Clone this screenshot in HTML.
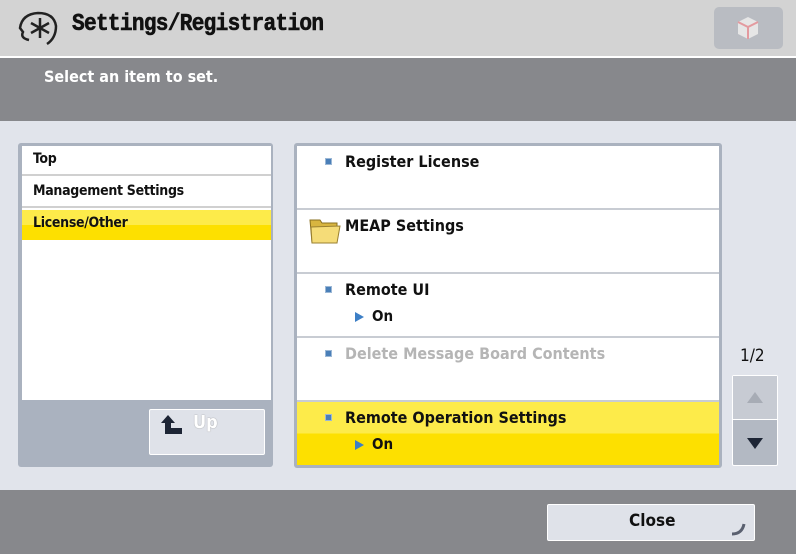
<!DOCTYPE html>
<html><head><style>
*{margin:0;padding:0;box-sizing:border-box}
body{width:796px;height:554px;overflow:hidden;position:relative;background:#e1e4eb;font-family:"DejaVu Sans","Liberation Sans",sans-serif;font-stretch:condensed;font-weight:bold;color:#111}
.a{position:absolute}
.row{position:absolute;left:0;right:0;background:#fff;font-size:16px}
.sq{position:absolute;width:7px;height:7px;background:#4a7fb8;border:1px solid #9cb8d6}
.tri{position:absolute;width:0;height:0;border-left:9px solid #3d7fc6;border-top:5px solid transparent;border-bottom:5px solid transparent}
</style></head><body>
<div class="a" style="left:0;top:0;width:796px;height:56px;background:#d3d3d3"></div>
<div class="a" style="left:0;top:56px;width:796px;height:2px;background:#fff"></div>
<div class="a" style="left:0;top:58px;width:796px;height:63px;background:#87888c"></div>
<svg class="a" style="left:16px;top:8px" width="46" height="40" viewBox="0 0 46 40"><path d="M13 32 Q4 30 7 24 L4 20 Q6 6 22 5 Q38 5 40 18 Q40 30 31 36" fill="none" stroke="#222" stroke-width="2.5"/><g stroke="#222" stroke-width="2.5"><line x1="24" y1="10" x2="24" y2="30"/><line x1="15" y1="15" x2="33" y2="25"/><line x1="15" y1="25" x2="33" y2="15"/></g></svg>
<div class="a" style="left:72px;top:11px;font-size:24px;font-family:'Liberation Mono',monospace;font-weight:bold;letter-spacing:-0.8px;-webkit-text-stroke:0.6px #111;transform:scaleX(0.88);transform-origin:left;white-space:nowrap">Settings/Registration</div>
<div class="a" style="left:714px;top:7px;width:69px;height:42px;border-radius:5px;background:#b9bcc2"></div>
<svg class="a" style="left:734px;top:14px" width="28" height="28" viewBox="0 0 28 28"><path d="M14 3 L24 8 L24 20 L14 25 L4 20 L4 8 Z" fill="#e6e6e6"/><path d="M4 8 L14 13 L24 8 M14 13 V25" stroke="#e39a9f" stroke-width="2" fill="none"/></svg>
<div class="a" style="left:44px;top:67px;color:#fff;font-size:16px">Select an item to set.</div>

<div class="a" style="left:18px;top:143px;width:255px;height:324px;background:#aab2bf;border-radius:3px"></div>
<div class="a" style="left:22px;top:146px;width:249px;height:254px;background:#fff">
<div class="row" style="top:0;height:30px;border-bottom:2px solid #d0d0d0"><span class="a" style="left:11px;top:5px;font-size:14px;letter-spacing:-0.3px">Top</span></div>
<div class="row" style="top:32px;height:30px;border-bottom:2px solid #d0d0d0"><span class="a" style="left:11px;top:5px;font-size:14px;letter-spacing:-0.3px">Management Settings</span></div>
<div class="row" style="top:64px;height:30px;background:linear-gradient(#fdeb4a 50%,#fde000 50%)"><span class="a" style="left:11px;top:5px;font-size:14px;letter-spacing:-0.3px">License/Other</span></div>
</div>
<div class="a" style="left:149px;top:409px;width:116px;height:46px;background:#dfe2e9;border:1px solid #fff;border-radius:2px"></div>
<svg class="a" style="left:160px;top:414px" width="24" height="22" viewBox="0 0 24 22"><path d="M8 1 L15 9 L11 9 L11 14 L22 14 L22 20 L5 20 L5 9 L1 9 Z" fill="#1d2535"/></svg>
<div class="a" style="left:193px;top:412px;font-size:18px;color:#fff;text-shadow:0 0 1px #777">Up</div>

<div class="a" style="left:294px;top:143px;width:428px;height:325px;background:#aab2bf;border-radius:3px"></div>
<div class="a" style="left:297px;top:146px;width:422px;height:319px;background:#c8ccd3">
<div class="row" style="top:0;height:62px"><i class="sq" style="left:28px;top:12px"></i><span class="a" style="left:48px;top:6px">Register License</span></div>
<div class="row" style="top:64px;height:62px"><svg class="a" style="left:12px;top:6px" width="32" height="30" viewBox="0 0 32 30"><path d="M1 4 L11 4 L13 7 L28 7 L28 27 L3 27 Z" fill="#d8b540" stroke="#8a7020"/><path d="M2 11 L31 10 L28 27 L3 27 Z" fill="#f5dc78" stroke="#9a8030"/></svg><span class="a" style="left:48px;top:6px">MEAP Settings</span></div>
<div class="row" style="top:128px;height:62px"><i class="sq" style="left:28px;top:12px"></i><span class="a" style="left:48px;top:6px">Remote UI</span><i class="tri" style="left:58px;top:38px"></i><span class="a" style="left:75px;top:33px;font-size:15px">On</span></div>
<div class="row" style="top:192px;height:62px"><i class="sq" style="left:28px;top:12px"></i><span class="a" style="left:48px;top:6px;color:#b5b5b5">Delete Message Board Contents</span></div>
<div class="row" style="top:256px;height:63px;background:linear-gradient(#fdeb4a 50%,#fde000 50%)"><i class="sq" style="left:28px;top:12px"></i><span class="a" style="left:48px;top:6px">Remote Operation Settings</span><i class="tri" style="left:58px;top:38px"></i><span class="a" style="left:75px;top:33px;font-size:15px">On</span></div>
</div>
<div class="a" style="left:740px;top:346px;font-size:17px;font-weight:normal">1/2</div>
<div class="a" style="left:732px;top:375px;width:46px;height:91px;border:1px solid #fff;border-radius:2px;background:#b3b9c3"></div>
<div class="a" style="left:733px;top:376px;width:44px;height:44px;background:#c7cbd3;border-bottom:1px solid #fff"></div>
<div class="a" style="left:747px;top:392px;border-left:8px solid transparent;border-right:8px solid transparent;border-bottom:11px solid #a7acb5"></div>
<div class="a" style="left:747px;top:438px;border-left:8px solid transparent;border-right:8px solid transparent;border-top:11px solid #1d2535"></div>

<div class="a" style="left:0;top:490px;width:796px;height:64px;background:#87888c"></div>
<div class="a" style="left:547px;top:504px;width:208px;height:37px;background:#dfe2e9;border:1px solid #fff;border-radius:2px"></div>
<div class="a" style="left:629px;top:511px;font-size:17px">Close</div>
<svg class="a" style="left:730px;top:522px" width="18" height="14" viewBox="0 0 18 14"><path d="M2 12 Q12 12 14 2" stroke="#5a6070" stroke-width="3" fill="none"/></svg>
</body></html>
